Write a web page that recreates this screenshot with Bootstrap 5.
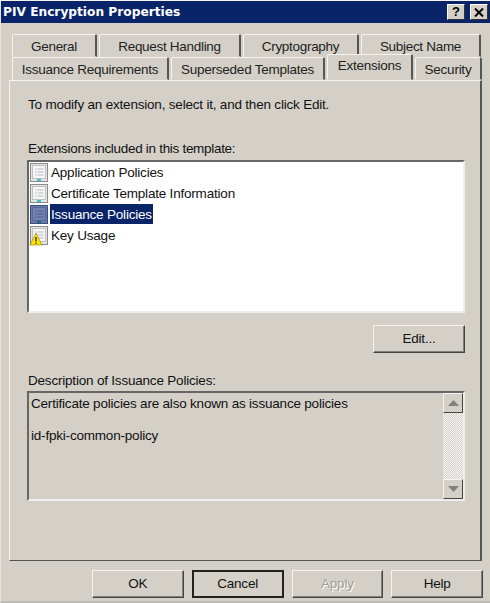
<!DOCTYPE html>
<html lang="en"><head><meta charset="utf-8"><title>PIV Encryption Properties</title>
<link href="https://cdn.jsdelivr.net/npm/bootstrap@5.3.0/dist/css/bootstrap.min.css" rel="stylesheet">
<style>
html,body{margin:0;background:#d4d0c8}
body{font-family:"Liberation Sans",Arial,sans-serif;font-size:13.5px;letter-spacing:-.2px;line-height:17px;color:#111}
.dlg{width:490px;height:603px;overflow:hidden;background:#d4d0c8;border-left:1px solid #e8e6e1;border-top:1px solid #f4f3f0;border-bottom:2px solid #bdbab3}
.ttl{height:22px;background:#0a246a;color:#fff;padding:0 2px 0 2px}
.ttl-t{font-family:"DejaVu Sans",sans-serif;font-weight:700;font-size:12.2px;letter-spacing:0;line-height:22px}
.tgap{gap:5px}
.tbtn{width:18px;height:16px;background:#d4d0c8;border:1px solid;border-color:#fff #333 #333 #fff;color:#000;font-weight:700;font-size:13px;line-height:14px;text-align:center;padding:0}
.tabs-area{margin:11px 0 0 8px;width:473px}
.trow{height:23px}
.trow1{padding-left:3px;gap:2px}
.trow1 .wtab{line-height:24px;letter-spacing:-.3px}
.trow2{padding-left:3px;gap:2px;height:23px}
.trow2 .wtab{letter-spacing:-.25px}
.wtab{height:23px;background:#d4d0c8;border:1px solid;border-color:#f4f3f0 #555 transparent #f4f3f0;border-right-width:2px;border-radius:2px 2px 0 0;text-align:center;line-height:23px;color:#222;white-space:nowrap}
.wtab.on{height:26px;margin-top:-3px;position:relative;z-index:2;line-height:22px;border-bottom:1px solid #d4d0c8;margin-bottom:-1px;border-color:#f4f3f0 #555 #d4d0c8 #f4f3f0}
.w1{width:85px}.w2{width:142px}.w3{width:116px}.w4{width:120px}
.w5{width:157px}.w6{width:154px}.w7{width:86px}.w8{width:67px}
.panel{height:481px;border:1px solid;border-color:#f4f3f0 #555 #555 #f4f3f0;border-right-width:2px;background:#d4d0c8;padding:15px 16px 0 17px}
.lbl{line-height:18px;padding-left:1px}
.lbl2{margin-top:26px;letter-spacing:-.3px}
.lbox{width:438px;height:153px;background:#fff;border:2px solid;border-color:#666 #eee #eee #666;margin-top:2px;padding:0;border-radius:0}
.litem{height:21px;border:0;background:transparent;padding:0;line-height:21px;color:#111}
.ltxt{padding:0 1px;height:20px;line-height:21px}
.litem.sel .ltxt{background:#0a246a;color:#fff}
.ico{width:20px;height:21px;flex:none;display:block;margin-right:1px}
.wbtn{background:#d4d0c8;border:1px solid;border-color:#f4f3f0 #444 #444 #f4f3f0;border-radius:0;box-shadow:inset -1px -1px 0 #808080;color:#111;font-size:13.5px;letter-spacing:-.2px;line-height:18px;padding:0 0 1px;width:92px;height:28px}
.wbtn:disabled{color:#a09d96;opacity:1;background:#d4d0c8;border-color:#f4f3f0 #444 #444 #f4f3f0;text-shadow:1px 1px 0 #fff}
.wbtn.dft{border:2px solid #222;box-shadow:none}
.editrow{margin-top:12px;width:438px}
.dlbl{margin-top:19px;line-height:18px;padding-left:1px}
.dbox{width:438px;height:110px;margin-top:1px;border:2px solid;border-color:#666 #eee #eee #666;background:#d4d0c8}
.dtxt{padding:3px 0 0 2px;line-height:16px}
.sbar{width:20px;flex:none;height:100%;margin-right:0}
.sbtn{width:20px;height:20px;flex:none;background:#d4d0c8;border:1px solid;border-color:#f4f3f0 #444 #444 #f4f3f0;padding:0;display:flex;align-items:center;justify-content:center}
.strack{flex:1;background-color:#f0efec;background-image:conic-gradient(#d4d0c8 25%,#f7f6f4 0 50%,#d4d0c8 0 75%,#f7f6f4 0);background-size:2px 2px}
.foot{margin-top:9px;width:482px;padding-left:91px;gap:8px}
</style></head>
<body>
<div class="dlg d-flex flex-column">
  <div class="ttl d-flex align-items-center justify-content-between">
    <span class="ttl-t">PIV Encryption Properties</span>
    <div class="d-flex tgap">
      <button class="tbtn" type="button">?</button>
      <button class="tbtn" type="button" aria-label="Close"><svg width="10" height="9" viewBox="0 0 10 9" aria-hidden="true"><path d="M1 0.5 9 8.5M9 0.5 1 8.5" stroke="#000" stroke-width="2"/></svg></button>
    </div>
  </div>
  <div class="tabs-area">
    <div class="trow trow1 d-flex">
      <div class="wtab w1">General</div><div class="wtab w2">Request Handling</div><div class="wtab w3">Cryptography</div><div class="wtab w4">Subject Name</div>
    </div>
    <div class="trow trow2 d-flex">
      <div class="wtab w5">Issuance Requirements</div><div class="wtab w6">Superseded Templates</div><div class="wtab w7 on">Extensions</div><div class="wtab w8">Security</div>
    </div>
    <div class="panel">
      <div class="lbl">To modify an extension, select it, and then click Edit.</div>
      <div class="lbl lbl2">Extensions included in this template:</div>
      <div class="lbox list-group">
        <div class="litem d-flex"><svg class="ico"><use href="#doc"/></svg><span class="ltxt">Application Policies</span></div>
        <div class="litem d-flex"><svg class="ico"><use href="#doc"/></svg><span class="ltxt">Certificate Template Information</span></div>
        <div class="litem sel d-flex"><svg class="ico"><use href="#docsel"/></svg><span class="ltxt">Issuance Policies</span></div>
        <div class="litem d-flex"><svg class="ico" viewBox="0 0 20 21"><use href="#doc"/><path d="M1 20 7 8 13 20Z" fill="#ffe600" stroke="#8a7a00" stroke-width=".6"/><rect x="6.3" y="12" width="1.4" height="4.5" fill="#333"/><rect x="6.3" y="17.5" width="1.4" height="1.3" fill="#333"/></svg><span class="ltxt">Key Usage</span></div>
      </div>
      <div class="editrow d-flex justify-content-end"><button class="wbtn btn" type="button">Edit...</button></div>
      <div class="dlbl">Description of Issuance Policies:</div>
      <div class="dbox d-flex">
        <div class="dtxt flex-grow-1">Certificate policies are also known as issuance policies<br><br>id-fpki-common-policy</div>
        <div class="sbar d-flex flex-column">
          <div class="sbtn"><svg width="11" height="6" viewBox="0 0 11 6"><path d="M5.5 0 11 6H0Z" fill="#808080"/></svg></div>
          <div class="strack"></div>
          <div class="sbtn"><svg width="11" height="6" viewBox="0 0 11 6"><path d="M5.5 6 11 0H0Z" fill="#808080"/></svg></div>
        </div>
      </div>
    </div>
  </div>
  <div class="foot d-flex">
    <button class="wbtn btn" type="button">OK</button>
    <button class="wbtn btn dft" type="button">Cancel</button>
    <button class="wbtn btn" type="button" disabled>Apply</button>
    <button class="wbtn btn" type="button">Help</button>
  </div>
</div>
<svg width="0" height="0" class="position-absolute" aria-hidden="true"><defs>
  <g id="doc"><rect x="1.5" y="1.5" width="17" height="18" fill="#e4e4e4" stroke="#8a8a8a"/><rect x="3.5" y="3.5" width="13" height="13" fill="#f6f6f6" stroke="#c0c0c0"/><path d="M6 7h1.5M8.5 7h6M6 10h1.5M8.5 10h6M6 13h1.5M8.5 13h6" stroke="#b4bcc4"/><rect x="8" y="17" width="4" height="2" fill="#33c4d0"/></g>
  <g id="docsel"><rect x="1.5" y="1.5" width="17" height="18" fill="#6a7ba6" stroke="#3a4c80"/><rect x="3.5" y="3.5" width="13" height="13" fill="#7284ae" stroke="#56689a"/><path d="M6 7h1.5M8.5 7h6M6 10h1.5M8.5 10h6M6 13h1.5M8.5 13h6" stroke="#4a5c8c"/><rect x="8" y="17" width="4" height="2" fill="#1a6a90"/></g>
</defs></svg>
<script src="https://cdn.jsdelivr.net/npm/bootstrap@5.3.0/dist/js/bootstrap.bundle.min.js"></script>
</body></html>
